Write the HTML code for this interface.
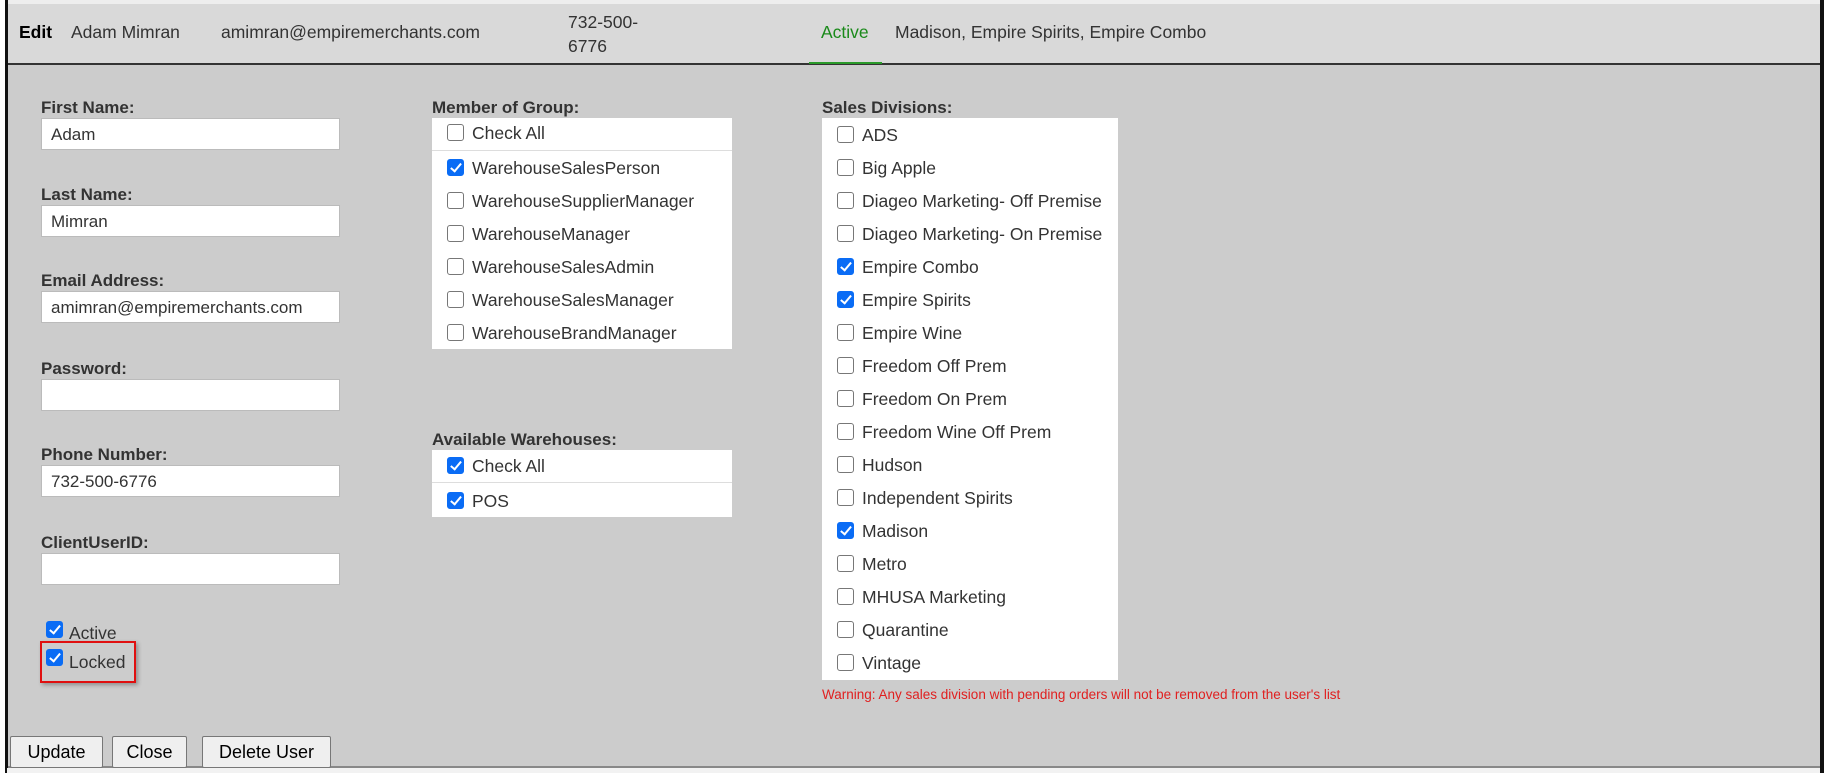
<!DOCTYPE html>
<html><head><style>
*{box-sizing:border-box;margin:0;padding:0}
body{width:1831px;height:773px;background:#fff;font-family:"Liberation Sans",sans-serif;position:relative;overflow:hidden;color:#333}
.a{position:absolute;white-space:nowrap}
#hdr{left:7px;top:0;width:1817px;height:65px;background:#d9d9d9;border-top:4px solid #eee;border-bottom:2px solid #333}
#body{left:7px;top:65px;width:1817px;height:703px;background:#cccccc;border-right:2px solid #fff;border-bottom:2px solid #888}
#lb{position:absolute;left:5px;top:0;width:3px;height:773px;background:#111}
#rb{position:absolute;left:1820px;top:0;width:4px;height:773px;background:#111}
.h{font-size:17.5px;color:#333;top:22px}
.lbl{font-weight:bold;font-size:17px;color:#333}
.inp{background:#fff;border:1px solid #bbb;width:299px;height:32px;font-size:17px;padding:6px 9px;color:#333}
.box{background:#fff}
.cb{position:absolute;width:17px;height:17px;border:1px solid #777;border-radius:3px;background:#fff}
.cb.on{background:#0a6cf5;border-color:#0a6cf5}
.cb.on::after{content:"";position:absolute;left:5px;top:1px;width:4px;height:9px;border:solid #fff;border-width:0 2.5px 2.5px 0;transform:rotate(40deg)}
.t{position:absolute;font-size:17.5px;color:#333;white-space:nowrap;margin-top:-1px}
.btn{position:absolute;top:736px;height:32px;background:#efefef;border:1px solid #777;border-radius:2px;font-size:18px;color:#000;text-align:center;line-height:30px}
</style></head><body>
<div class="a" id="hdr"></div>
<div class="a" id="body"></div>
<div id="lb"></div><div id="rb"></div>
<div class="a h" style="left:19px;font-weight:bold;color:#000">Edit</div>
<div class="a h" style="left:71px">Adam Mimran</div>
<div class="a h" style="left:221px">amimran@empiremerchants.com</div>
<div class="a h" style="left:568px;top:10px;line-height:24px">732-500-<br>6776</div>
<div class="a h" style="left:821px;color:#1a8a1a">Active</div>
<div class="a" style="left:809px;top:62px;width:73px;height:2px;background:#2a9a2a"></div>
<div class="a h" style="left:895px">Madison, Empire Spirits, Empire Combo</div>

<div class="a lbl" style="left:41px;top:98px">First Name:</div>
<div class="a inp" style="left:41px;top:118px">Adam</div>
<div class="a lbl" style="left:41px;top:185px">Last Name:</div>
<div class="a inp" style="left:41px;top:205px">Mimran</div>
<div class="a lbl" style="left:41px;top:271px">Email Address:</div>
<div class="a inp" style="left:41px;top:291px">amimran@empiremerchants.com</div>
<div class="a lbl" style="left:41px;top:359px">Password:</div>
<div class="a inp" style="left:41px;top:379px"></div>
<div class="a lbl" style="left:41px;top:445px">Phone Number:</div>
<div class="a inp" style="left:41px;top:465px">732-500-6776</div>
<div class="a lbl" style="left:41px;top:533px">ClientUserID:</div>
<div class="a inp" style="left:41px;top:553px"></div>

<div class="cb on" style="left:46px;top:621px"></div><div class="t" style="left:69px;top:624px">Active</div>
<div class="a" style="left:40px;top:641px;width:96px;height:42px;border:2px solid #e01010;box-shadow:2px 2px 4px rgba(0,0,0,.3)"></div>
<div class="cb on" style="left:46px;top:649px"></div><div class="t" style="left:69px;top:653px">Locked</div>

<div class="a lbl" style="left:432px;top:98px">Member of Group:</div>
<div class="a box" style="left:432px;top:118px;width:300px;height:231px"></div>
<div class="a" style="left:432px;top:150px;width:300px;height:1px;background:#ddd"></div>
<div class="cb" style="left:447px;top:124px"></div><div class="t" style="left:472px;top:124px">Check All</div>
<div class="cb on" style="left:447px;top:159px"></div><div class="t" style="left:472px;top:159px">WarehouseSalesPerson</div>
<div class="cb" style="left:447px;top:192px"></div><div class="t" style="left:472px;top:192px">WarehouseSupplierManager</div>
<div class="cb" style="left:447px;top:225px"></div><div class="t" style="left:472px;top:225px">WarehouseManager</div>
<div class="cb" style="left:447px;top:258px"></div><div class="t" style="left:472px;top:258px">WarehouseSalesAdmin</div>
<div class="cb" style="left:447px;top:291px"></div><div class="t" style="left:472px;top:291px">WarehouseSalesManager</div>
<div class="cb" style="left:447px;top:324px"></div><div class="t" style="left:472px;top:324px">WarehouseBrandManager</div>

<div class="a lbl" style="left:432px;top:430px">Available Warehouses:</div>
<div class="a box" style="left:432px;top:450px;width:300px;height:67px"></div>
<div class="a" style="left:432px;top:482px;width:300px;height:1px;background:#ddd"></div>
<div class="cb on" style="left:447px;top:457px"></div><div class="t" style="left:472px;top:457px">Check All</div>
<div class="cb on" style="left:447px;top:492px"></div><div class="t" style="left:472px;top:492px">POS</div>

<div class="a lbl" style="left:822px;top:98px">Sales Divisions:</div>
<div class="a box" style="left:822px;top:118px;width:296px;height:562px"></div>
<div class="cb" style="left:837px;top:126px"></div><div class="t" style="left:862px;top:126px">ADS</div>
<div class="cb" style="left:837px;top:159px"></div><div class="t" style="left:862px;top:159px">Big Apple</div>
<div class="cb" style="left:837px;top:192px"></div><div class="t" style="left:862px;top:192px">Diageo Marketing- Off Premise</div>
<div class="cb" style="left:837px;top:225px"></div><div class="t" style="left:862px;top:225px">Diageo Marketing- On Premise</div>
<div class="cb on" style="left:837px;top:258px"></div><div class="t" style="left:862px;top:258px">Empire Combo</div>
<div class="cb on" style="left:837px;top:291px"></div><div class="t" style="left:862px;top:291px">Empire Spirits</div>
<div class="cb" style="left:837px;top:324px"></div><div class="t" style="left:862px;top:324px">Empire Wine</div>
<div class="cb" style="left:837px;top:357px"></div><div class="t" style="left:862px;top:357px">Freedom Off Prem</div>
<div class="cb" style="left:837px;top:390px"></div><div class="t" style="left:862px;top:390px">Freedom On Prem</div>
<div class="cb" style="left:837px;top:423px"></div><div class="t" style="left:862px;top:423px">Freedom Wine Off Prem</div>
<div class="cb" style="left:837px;top:456px"></div><div class="t" style="left:862px;top:456px">Hudson</div>
<div class="cb" style="left:837px;top:489px"></div><div class="t" style="left:862px;top:489px">Independent Spirits</div>
<div class="cb on" style="left:837px;top:522px"></div><div class="t" style="left:862px;top:522px">Madison</div>
<div class="cb" style="left:837px;top:555px"></div><div class="t" style="left:862px;top:555px">Metro</div>
<div class="cb" style="left:837px;top:588px"></div><div class="t" style="left:862px;top:588px">MHUSA Marketing</div>
<div class="cb" style="left:837px;top:621px"></div><div class="t" style="left:862px;top:621px">Quarantine</div>
<div class="cb" style="left:837px;top:654px"></div><div class="t" style="left:862px;top:654px">Vintage</div>
<div class="a" style="left:822px;top:687px;font-size:13.5px;color:#e02020">Warning: Any sales division with pending orders will not be removed from the user's list</div>

<div class="btn" style="left:10px;width:93px">Update</div>
<div class="btn" style="left:112px;width:75px">Close</div>
<div class="btn" style="left:202px;width:129px">Delete User</div>
<div class="a" style="left:7px;top:768px;width:1813px;height:5px;background:#f2f2f2"></div>
</body></html>
